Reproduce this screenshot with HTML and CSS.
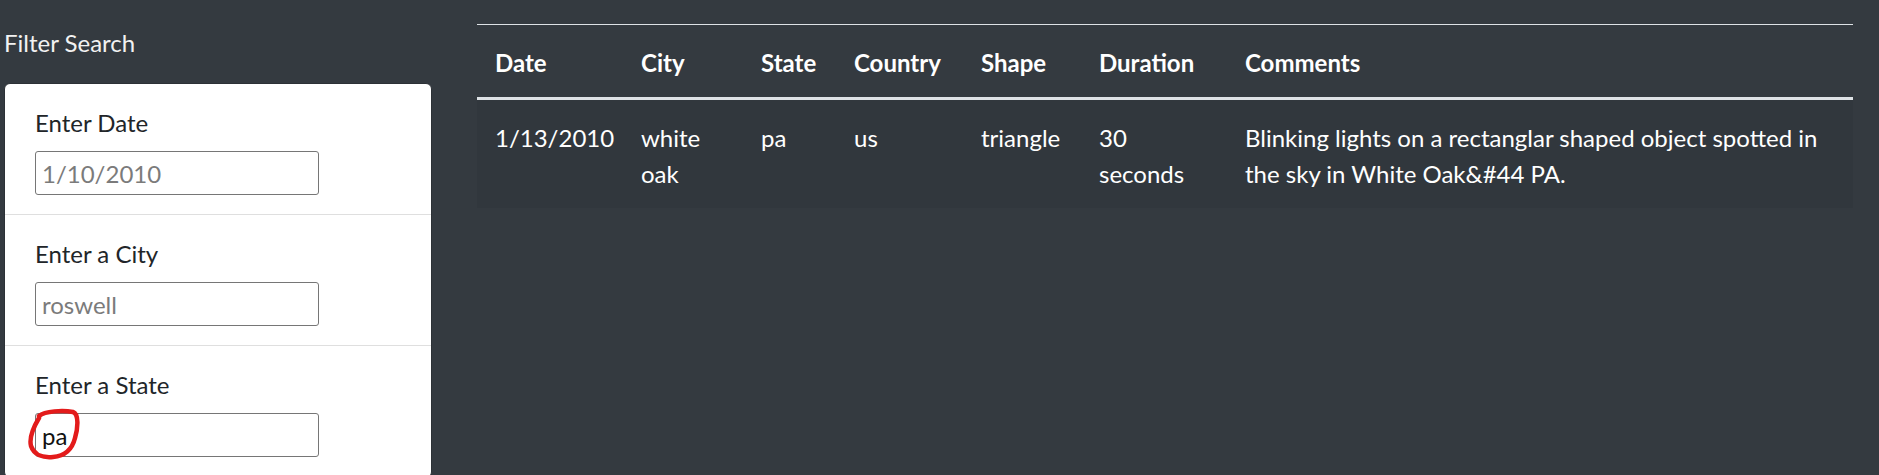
FILE: index.html
```html
<!DOCTYPE html>
<html lang="en">
<head>
<meta charset="utf-8">
<title>UFO Sightings</title>
<link rel="stylesheet" href="styles.css">
</head>
<body>
<div class="page">
  <aside class="sidebar">
    <div class="filter-title">Filter Search</div>
    <ul class="card">
      <li class="item">
        <label class="label" for="date">Enter Date</label>
        <input class="field" id="date" type="text" placeholder="1/10/2010">
      </li>
      <li class="item">
        <label class="label" for="city">Enter a City</label>
        <input class="field" id="city" type="text" placeholder="roswell">
      </li>
      <li class="item">
        <label class="label" for="state">Enter a State</label>
        <input class="field" id="state" type="text" value="pa">
        <svg class="mark" width="56" height="54" viewBox="0 0 56 54" aria-hidden="true">
          <path d="M12,8 C18,3 36,2 46,4 C52,6 51,20 48,30 C45,42 38,48 26,49 C16,50 7,47 4,38 C2,30 6,20 12,10" fill="none" stroke="#e31b1b" stroke-width="4.5" stroke-linecap="round" stroke-linejoin="round"/>
        </svg>
      </li>
    </ul>
  </aside>
  <main class="content">
    <table class="table">
      <colgroup>
        <col class="c-date"><col class="c-city"><col class="c-state"><col class="c-country"><col class="c-shape"><col class="c-duration"><col class="c-comments">
      </colgroup>
      <thead>
        <tr>
          <th>Date</th><th>City</th><th>State</th><th>Country</th><th>Shape</th><th>Duration</th><th>Comments</th>
        </tr>
      </thead>
      <tbody>
        <tr>
          <td>1/13/2010</td><td>white oak</td><td>pa</td><td>us</td><td>triangle</td><td>30 seconds</td><td>Blinking lights on a rectanglar shaped object spotted in the sky in White Oak&amp;#44 PA.</td>
        </tr>
      </tbody>
    </table>
  </main>
</div>
</body>
</html>
```

FILE: styles.css
```css
html, body {
  margin: 0;
  padding: 0;
  background: #343a40;
  height: 100%;
  overflow: hidden;
}

body {
  font-family: Lato, "Liberation Sans", sans-serif;
  font-size: 24px;
  line-height: 36px;
  color: #ffffff;
}

.page {
  display: flex;
  align-items: flex-start;
}

.sidebar {
  width: 428px;
  padding: 25px 0 0 4px;
  flex: none;
}

.filter-title {
  color: #f2f2f2;
  margin-bottom: 22px;
}

.card {
  list-style: none;
  margin: 0;
  padding: 0;
  background: #ffffff;
  border: 1px solid #2c3136;
  border-radius: 6px;
  overflow: hidden;
}

.item {
  position: relative;
  padding: 19px 30px;
  border-bottom: 1px solid #dfdfdf;
  color: #212529;
}

.label {
  display: block;
  padding-top: 2px;
  margin-bottom: 10px;
}

.field {
  display: block;
  box-sizing: border-box;
  width: 284px;
  height: 44px;
  margin: 0;
  padding: 0 6px;
  border: 1px solid #767676;
  border-radius: 3px;
  background: #ffffff;
  font-family: inherit;
  font-size: 24px;
  color: #111111;
  outline: none;
}

.field::placeholder {
  color: #7b7b7b;
}

.mark {
  position: absolute;
  left: 22px;
  top: 62px;
}

.content {
  flex: none;
  margin-left: 45px;
  padding-top: 24px;
}

.table {
  width: 1376px;
  table-layout: fixed;
  border-collapse: collapse;
}

.c-date { width: 146px; }
.c-city { width: 120px; }
.c-state { width: 93px; }
.c-country { width: 127px; }
.c-shape { width: 118px; }
.c-duration { width: 146px; }
.c-comments { width: 626px; }

.table th,
.table td {
  padding: 20px 18px 16px;
  text-align: left;
  vertical-align: top;
}

.table th {
  font-weight: 700;
  border-top: 1px solid #dee2e6;
  border-bottom: 3px solid #dee2e6;
}

.table tbody tr {
  background: #31373d;
}
```
